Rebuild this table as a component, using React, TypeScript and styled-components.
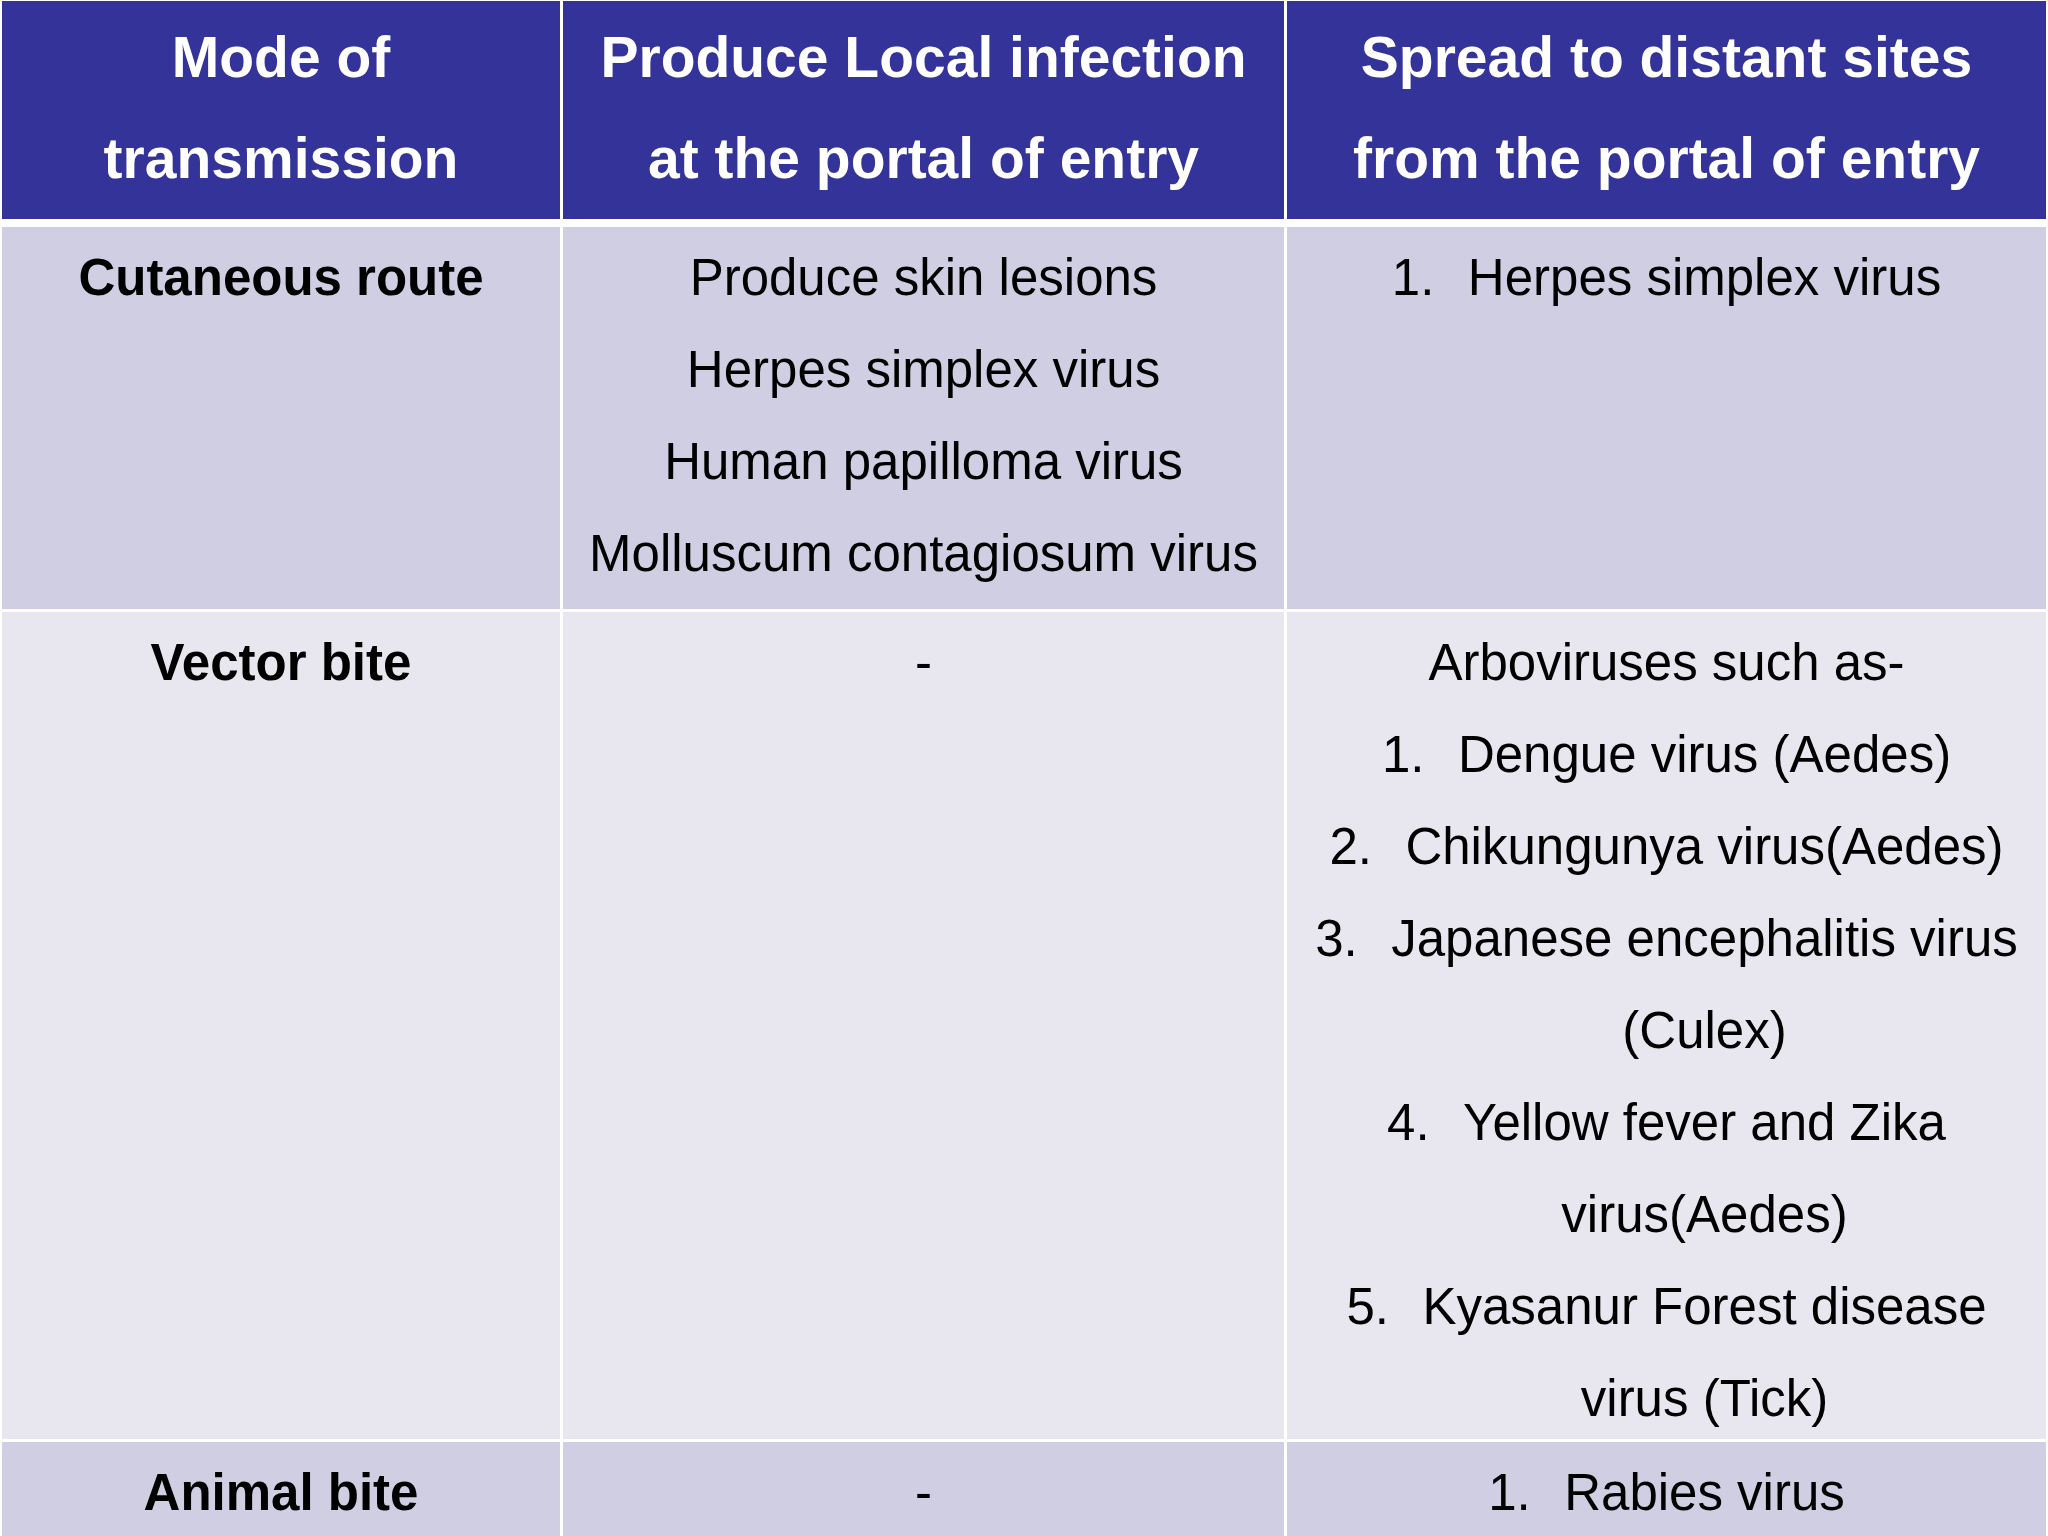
import React from "react";
import styled, { createGlobalStyle } from "styled-components";

const Global = createGlobalStyle`
  html, body {
    margin: 0;
    padding: 0;
    width: 2048px;
    height: 1536px;
    overflow: hidden;
    background: #ffffff;
  }
  body {
    font-family: "Liberation Sans", Arial, Helvetica, sans-serif;
    color: #000;
  }
`;

const Table = styled.div`
  display: flex;
  flex-direction: column;
  gap: 3px;
  width: 2048px;
  height: 1536px;
  box-sizing: border-box;
  padding: 1px 2px 0 2px;
  background: #ffffff;
  border-left: 0;
`;

const Row = styled.div<{ $head?: boolean; $height: number }>`
  display: grid;
  grid-template-columns: 558px 721px 759px;
  column-gap: 3px;
  height: ${(p) => p.$height}px;
  flex-shrink: 0;
  margin-bottom: ${(p) => (p.$head ? 5 : 0)}px;
`;

const HeadCell = styled.div`
  background: #343399;
  color: #ffffff;
  font-weight: 700;
  font-size: 57px;
  line-height: 101px;
  text-align: center;
  padding-top: 6px;
  box-sizing: border-box;
  white-space: nowrap;
`;

const Cell = styled.div<{ $shade: "dark" | "light"; $bold?: boolean }>`
  background: ${(p) => (p.$shade === "dark" ? "#cfcee2" : "#e8e7f0")};
  font-size: 51px;
  line-height: 92px;
  font-weight: ${(p) => (p.$bold ? 700 : 400)};
  text-align: center;
  padding: 5px 10px 0 10px;
  box-sizing: border-box;
  overflow: hidden;
`;

const Line = styled.div`
  white-space: nowrap;
`;

const Item = styled.div`
  padding-left: 76px;
  white-space: nowrap;
`;

const Num = styled.span`
  display: inline-block;
  width: 76px;
  margin-left: -76px;
  text-align: left;
`;

export default function App() {
  return (
    <>
      <Global />
      <Table>
        <Row $head $height={218}>
          <HeadCell>
            Mode of
            <br />
            transmission
          </HeadCell>
          <HeadCell>
            Produce Local infection
            <br />
            at the portal of entry
          </HeadCell>
          <HeadCell>
            Spread to distant sites
            <br />
            from the portal of entry
          </HeadCell>
        </Row>

        <Row $height={382}>
          <Cell $shade="dark" $bold>
            <Line>Cutaneous route</Line>
          </Cell>
          <Cell $shade="dark">
            <Line>Produce skin lesions</Line>
            <Line>Herpes simplex virus</Line>
            <Line>Human papilloma virus</Line>
            <Line>Molluscum contagiosum virus</Line>
          </Cell>
          <Cell $shade="dark">
            <Item>
              <Num>1.</Num>Herpes simplex virus
            </Item>
          </Cell>
        </Row>

        <Row $height={827}>
          <Cell $shade="light" $bold>
            <Line>Vector bite</Line>
          </Cell>
          <Cell $shade="light">
            <Line>-</Line>
          </Cell>
          <Cell $shade="light">
            <Line>Arboviruses such as-</Line>
            <Item>
              <Num>1.</Num>Dengue virus (Aedes)
            </Item>
            <Item>
              <Num>2.</Num>Chikungunya virus(Aedes)
            </Item>
            <Item>
              <Num>3.</Num>Japanese encephalitis virus
              <br />
              (Culex)
            </Item>
            <Item>
              <Num>4.</Num>Yellow fever and Zika
              <br />
              virus(Aedes)
            </Item>
            <Item>
              <Num>5.</Num>Kyasanur Forest disease
              <br />
              virus (Tick)
            </Item>
          </Cell>
        </Row>

        <Row $height={120}>
          <Cell $shade="dark" $bold>
            <Line>Animal bite</Line>
          </Cell>
          <Cell $shade="dark">
            <Line>-</Line>
          </Cell>
          <Cell $shade="dark">
            <Item>
              <Num>1.</Num>Rabies virus
            </Item>
          </Cell>
        </Row>
      </Table>
    </>
  );
}
